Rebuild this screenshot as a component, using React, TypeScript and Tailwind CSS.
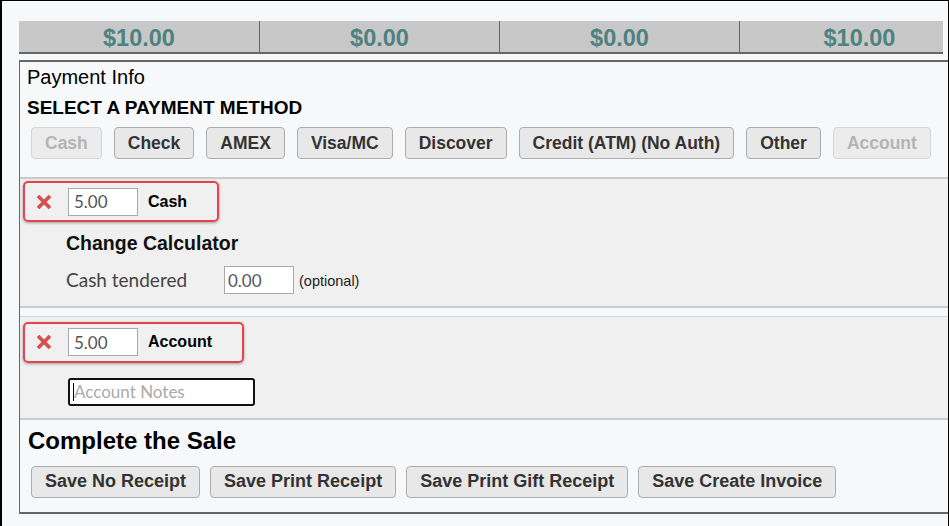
import React from "react";

const totals = ["$10.00", "$0.00", "$0.00", "$10.00"];

const methods = [
  { label: "Cash", disabled: true },
  { label: "Check" },
  { label: "AMEX" },
  { label: "Visa/MC" },
  { label: "Discover" },
  { label: "Credit (ATM) (No Auth)" },
  { label: "Other" },
  { label: "Account", disabled: true },
];

const saveActions = [
  "Save No Receipt",
  "Save Print Receipt",
  "Save Print Gift Receipt",
  "Save Create Invoice",
];

function RemoveIcon() {
  return (
    <svg width="16" height="16" viewBox="0 0 16 16" className="shrink-0">
      <path d="M2 2 L14 14 M14 2 L2 14" stroke="#d4504d" strokeWidth="3.6" />
    </svg>
  );
}

function AmountInput({ value }: { value: string }) {
  return (
    <input
      readOnly
      value={value}
      className="box-border h-[28px] w-[70px] border border-[#a9a9a9] bg-white px-[5px] font-['Lato'] text-[17px] text-[#555] outline-none"
    />
  );
}

function TenderRow({ label }: { label: string }) {
  // red outline marks the line added for this tender
  return (
    <div className="ml-[3px] inline-flex h-[41px] items-center rounded-[5px] border-2 border-[#e8434b] pl-[11px] pr-[30px] shadow-[0_1px_3px_rgba(0,0,0,0.35)]">
      <RemoveIcon />
      <div className="ml-[16px] flex">
        <AmountInput value="5.00" />
      </div>
      <span className="ml-[10px] text-[16px] font-bold text-black">{label}</span>
    </div>
  );
}

export default function App() {
  return (
    <div className="h-[526px] w-[949px] overflow-hidden border-t border-r border-l-2 border-black bg-[#f7f8fa] pl-[17px] pt-[20px] font-['Liberation_Sans',Arial,sans-serif]">
      {/* Totals bar */}
      <div className="flex h-[33px] w-[924px] overflow-hidden border-b-2 border-[#666] bg-[#c8c8c8]">
        {totals.map((t, i) => (
          <div
            key={i}
            className={`flex h-full w-[240px] shrink-0 items-center justify-center pt-[4px] text-[23.5px] font-bold text-[#4d8281] ${
              i > 0 ? "border-l border-[#666]" : ""
            }`}
          >
            {t}
          </div>
        ))}
      </div>

      {/* Payment panel */}
      <div className="mt-[6px] border-t-2 border-b-2 border-l border-[#666]">
        <div className="pb-[18px]">
          <div className="pl-[7px] text-[20px] leading-[30px] text-black">Payment Info</div>
          <div className="mt-[1px] pl-[7px] text-[19px] font-bold leading-[30px] text-black">
            SELECT A PAYMENT METHOD
          </div>
          <div className="ml-[11px] mt-[4px] flex gap-[12px]">
            {methods.map((m) => (
              <button
                key={m.label}
                disabled={m.disabled}
                className={`h-[32px] rounded-[4px] border px-[13px] text-[17.5px] font-bold ${
                  m.disabled
                    ? "border-[#d6d6d6] bg-[#ececec] text-[#b4b4b4]"
                    : "border-[#adadad] bg-[#e8e8e8] text-[#333]"
                }`}
              >
                {m.label}
              </button>
            ))}
          </div>
        </div>

        {/* Cash tender */}
        <div className="border-t-2 border-b-2 border-[#cbcbcb] bg-[#f0f0f0] pb-[11px] pt-[2px]">
          <TenderRow label="Cash" />
          <div className="mt-[8px] pl-[46px] text-[19.5px] font-bold leading-[26px] text-[#111]">
            Change Calculator
          </div>
          <div className="mt-[10px] flex items-center pl-[46px]">
            <span className="w-[158px] font-['Lato'] text-[19px] text-[#444]">Cash tendered</span>
            <input
              readOnly
              value="0.00"
              className="h-[28px] w-[70px] border border-[#a9a9a9] bg-white px-[3px] font-['Lato'] text-[17px] text-[#555] outline-none"
            />
            <span className="ml-[5px] mt-[3px] text-[14.5px] text-[#222]">(optional)</span>
          </div>
        </div>

        {/* Account tender */}
        <div className="mt-[8px] border-t border-b-2 border-t-[#d8d8d8] border-b-[#cbcbcb] bg-[#f0f0f0] pb-[12px] pt-[5px]">
          <TenderRow label="Account" />
          <div className="relative ml-[48px] mt-[15px] flex w-[187px]">
            <input
              placeholder="Account Notes"
              className="h-[28px] w-[187px] rounded-[3px] border-2 border-[#111] bg-white px-[4px] font-['Lato'] text-[17px] text-[#333] outline-none placeholder:text-[#aaa]"
            />
            <span className="absolute left-[5px] top-[5px] h-[18px] w-px bg-black" />
          </div>
        </div>

        {/* Complete the sale */}
        <div className="pb-[14px] pt-[6px]">
          <div className="pl-[8px] text-[24px] font-bold leading-[30px] text-black">Complete the Sale</div>
          <div className="ml-[11px] mt-[10px] flex gap-[10px]">
            {saveActions.map((a) => (
              <button
                key={a}
                className="h-[32px] rounded-[4px] border border-[#adadad] bg-[#e8e8e8] px-[13px] text-[18px] font-bold text-[#333]"
              >
                {a}
              </button>
            ))}
          </div>
        </div>
      </div>
    </div>
  );
}
